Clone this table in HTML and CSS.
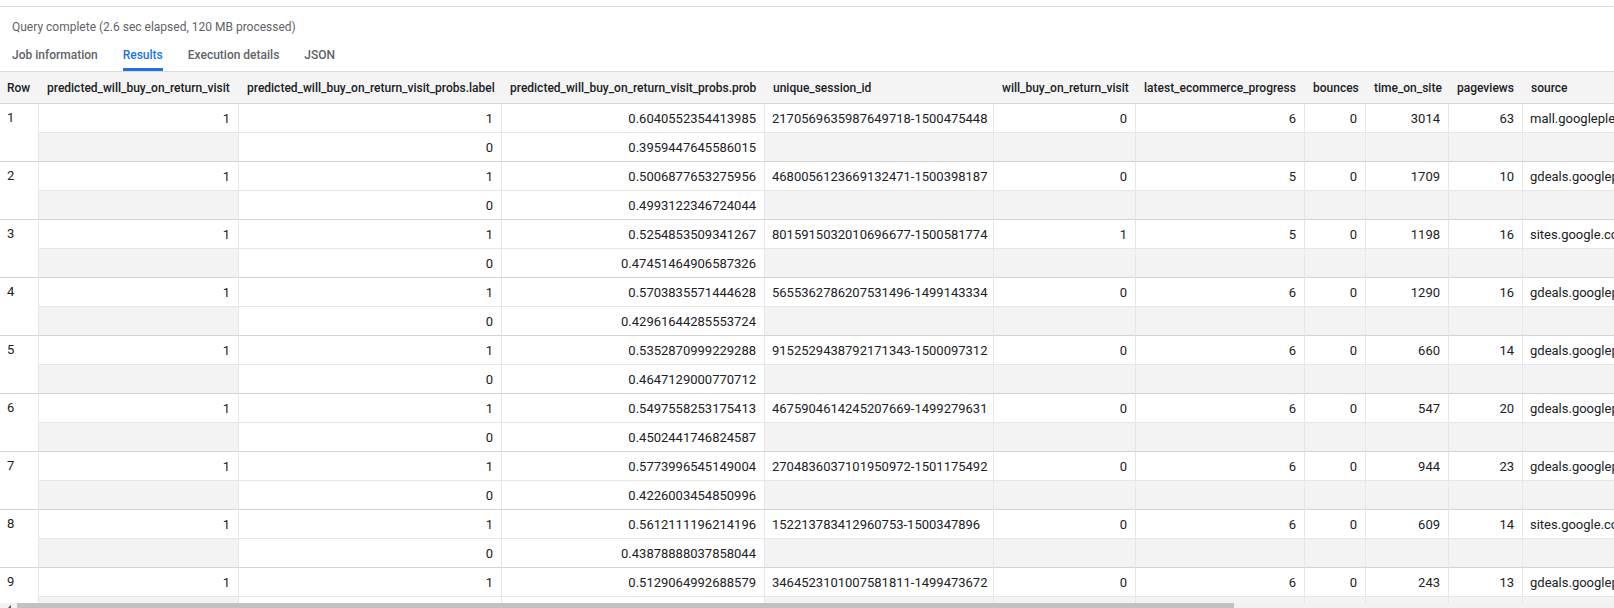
FILE: index.html
```html
<!DOCTYPE html>
<html>
<head>
<meta charset="utf-8">
<link rel="stylesheet" href="styles.css">
</head>
<body>
<div class="page">
  <div class="topline"></div>
  <div class="status">Query complete (2.6 sec elapsed, 120 MB processed)</div>
  <nav class="tabs">
    <span class="tab">Job information</span>
    <span class="tab active">Results</span>
    <span class="tab">Execution details</span>
    <span class="tab">JSON</span>
  </nav>
  <div class="results">
    <table class="grid">
      <colgroup>
        <col class="c-row"><col class="c1"><col class="c2"><col class="c3"><col class="c4"><col class="c5"><col class="c6"><col class="c7"><col class="c8"><col class="c9"><col class="c10">
      </colgroup>
      <thead>
        <tr>
          <th class="rowh">Row</th>
          <th>predicted_will_buy_on_return_visit</th>
          <th>predicted_will_buy_on_return_visit_probs.label</th>
          <th>predicted_will_buy_on_return_visit_probs.prob</th>
          <th>unique_session_id</th>
          <th>will_buy_on_return_visit</th>
          <th>latest_ecommerce_progress</th>
          <th>bounces</th>
          <th>time_on_site</th>
          <th>pageviews</th>
          <th>source</th>
        </tr>
      </thead>
      <tbody>
        <tr class="r1"><td class="rownum" rowspan="2">1</td><td class="num">1</td><td class="num">1</td><td class="num">0.6040552354413985</td><td>2170569635987649718-1500475448</td><td class="num">0</td><td class="num">6</td><td class="num">0</td><td class="num">3014</td><td class="num">63</td><td>mall.googleplex.com</td></tr>
        <tr class="r2"><td class="empty"></td><td class="num">0</td><td class="num">0.3959447645586015</td><td class="empty"></td><td class="empty"></td><td class="empty"></td><td class="empty"></td><td class="empty"></td><td class="empty"></td><td class="empty"></td></tr>

        <tr class="r1"><td class="rownum" rowspan="2">2</td><td class="num">1</td><td class="num">1</td><td class="num">0.5006877653275956</td><td>4680056123669132471-1500398187</td><td class="num">0</td><td class="num">5</td><td class="num">0</td><td class="num">1709</td><td class="num">10</td><td>gdeals.googleplex.com</td></tr>
        <tr class="r2"><td class="empty"></td><td class="num">0</td><td class="num">0.4993122346724044</td><td class="empty"></td><td class="empty"></td><td class="empty"></td><td class="empty"></td><td class="empty"></td><td class="empty"></td><td class="empty"></td></tr>

        <tr class="r1"><td class="rownum" rowspan="2">3</td><td class="num">1</td><td class="num">1</td><td class="num">0.5254853509341267</td><td>8015915032010696677-1500581774</td><td class="num">1</td><td class="num">5</td><td class="num">0</td><td class="num">1198</td><td class="num">16</td><td>sites.google.com</td></tr>
        <tr class="r2"><td class="empty"></td><td class="num">0</td><td class="num">0.47451464906587326</td><td class="empty"></td><td class="empty"></td><td class="empty"></td><td class="empty"></td><td class="empty"></td><td class="empty"></td><td class="empty"></td></tr>

        <tr class="r1"><td class="rownum" rowspan="2">4</td><td class="num">1</td><td class="num">1</td><td class="num">0.5703835571444628</td><td>5655362786207531496-1499143334</td><td class="num">0</td><td class="num">6</td><td class="num">0</td><td class="num">1290</td><td class="num">16</td><td>gdeals.googleplex.com</td></tr>
        <tr class="r2"><td class="empty"></td><td class="num">0</td><td class="num">0.42961644285553724</td><td class="empty"></td><td class="empty"></td><td class="empty"></td><td class="empty"></td><td class="empty"></td><td class="empty"></td><td class="empty"></td></tr>

        <tr class="r1"><td class="rownum" rowspan="2">5</td><td class="num">1</td><td class="num">1</td><td class="num">0.5352870999229288</td><td>9152529438792171343-1500097312</td><td class="num">0</td><td class="num">6</td><td class="num">0</td><td class="num">660</td><td class="num">14</td><td>gdeals.googleplex.com</td></tr>
        <tr class="r2"><td class="empty"></td><td class="num">0</td><td class="num">0.4647129000770712</td><td class="empty"></td><td class="empty"></td><td class="empty"></td><td class="empty"></td><td class="empty"></td><td class="empty"></td><td class="empty"></td></tr>

        <tr class="r1"><td class="rownum" rowspan="2">6</td><td class="num">1</td><td class="num">1</td><td class="num">0.5497558253175413</td><td>4675904614245207669-1499279631</td><td class="num">0</td><td class="num">6</td><td class="num">0</td><td class="num">547</td><td class="num">20</td><td>gdeals.googleplex.com</td></tr>
        <tr class="r2"><td class="empty"></td><td class="num">0</td><td class="num">0.4502441746824587</td><td class="empty"></td><td class="empty"></td><td class="empty"></td><td class="empty"></td><td class="empty"></td><td class="empty"></td><td class="empty"></td></tr>

        <tr class="r1"><td class="rownum" rowspan="2">7</td><td class="num">1</td><td class="num">1</td><td class="num">0.5773996545149004</td><td>2704836037101950972-1501175492</td><td class="num">0</td><td class="num">6</td><td class="num">0</td><td class="num">944</td><td class="num">23</td><td>gdeals.googleplex.com</td></tr>
        <tr class="r2"><td class="empty"></td><td class="num">0</td><td class="num">0.4226003454850996</td><td class="empty"></td><td class="empty"></td><td class="empty"></td><td class="empty"></td><td class="empty"></td><td class="empty"></td><td class="empty"></td></tr>

        <tr class="r1"><td class="rownum" rowspan="2">8</td><td class="num">1</td><td class="num">1</td><td class="num">0.5612111196214196</td><td>152213783412960753-1500347896</td><td class="num">0</td><td class="num">6</td><td class="num">0</td><td class="num">609</td><td class="num">14</td><td>sites.google.com</td></tr>
        <tr class="r2"><td class="empty"></td><td class="num">0</td><td class="num">0.43878888037858044</td><td class="empty"></td><td class="empty"></td><td class="empty"></td><td class="empty"></td><td class="empty"></td><td class="empty"></td><td class="empty"></td></tr>

        <tr class="r1"><td class="rownum" rowspan="2">9</td><td class="num">1</td><td class="num">1</td><td class="num">0.5129064992688579</td><td>3464523101007581811-1499473672</td><td class="num">0</td><td class="num">6</td><td class="num">0</td><td class="num">243</td><td class="num">13</td><td>gdeals.googleplex.com</td></tr>
        <tr class="r2"><td class="empty"></td><td class="num">0</td><td class="num">0.48709350073114213</td><td class="empty"></td><td class="empty"></td><td class="empty"></td><td class="empty"></td><td class="empty"></td><td class="empty"></td><td class="empty"></td></tr>
      </tbody>
    </table>
  </div>
  <div class="hscroll">
    <span class="arrow"></span>
    <span class="thumb"></span>
  </div>
</div>
</body>
</html>
```

FILE: styles.css
```css
html, body {
  margin: 0;
  padding: 0;
  background: #ffffff;
  overflow: hidden;
}

body {
  font-family: Roboto, "Liberation Sans", Arial, sans-serif;
  font-size: 13px;
  color: #202124;
}

.page {
  width: 1614px;
  height: 608px;
  overflow: hidden;
  display: flex;
  flex-direction: column;
}

.topline {
  height: 6px;
  border-bottom: 1px solid #dadce0;
  flex: none;
}

.status {
  flex: none;
  padding: 10px 0 0 12px;
  height: 20px;
  line-height: 20px;
  color: #5f6368;
  font-size: 12px;
}

.tabs {
  flex: none;
  display: flex;
  gap: 25px;
  padding: 0 12px;
  height: 34px;
}

.tab {
  padding-top: 8px;
  line-height: 20px;
  height: 23px;
  border-bottom: 3px solid transparent;
  color: #5f6368;
  font-weight: 500;
  font-size: 12px;
}

.tab.active {
  color: #1a73e8;
  border-bottom-color: #1a73e8;
}

.results {
  flex: none;
  height: 532px;
  overflow: hidden;
}

.grid {
  border-collapse: separate;
  border-spacing: 0;
  table-layout: fixed;
  width: 1742px;
}

.c-row { width: 39px; }
.c1 { width: 200px; }
.c2 { width: 263px; }
.c3 { width: 263px; }
.c4 { width: 229px; }
.c5 { width: 142px; }
.c6 { width: 169px; }
.c7 { width: 61px; }
.c8 { width: 83px; }
.c9 { width: 74px; }
.c10 { width: 219px; }

.grid th {
  box-sizing: border-box;
  height: 33px;
  padding: 0 8px;
  background: #f4f4f4;
  border-top: 1px solid #dadada;
  border-bottom: 1px solid #d6d6d6;
  text-align: left;
  font-size: 12px;
  font-weight: 500;
  color: #202124;
  white-space: nowrap;
  overflow: hidden;
}

.grid th.rowh {
  padding-left: 7px;
}

.grid td {
  box-sizing: border-box;
  height: 29px;
  padding: 0 8px 0 7px;
  border-right: 1px solid #e6e6e6;
  border-bottom: 1px solid #e6e6e6;
  white-space: nowrap;
  overflow: hidden;
  background: #ffffff;
}

.grid td.num {
  text-align: right;
}

.grid td.rownum {
  vertical-align: top;
  line-height: 28px;
  padding-left: 7px;
  border-bottom: 1px solid #d4d4d4;
}

.grid tr.r2 td {
  border-bottom: 1px solid #d4d4d4;
}

.grid td.empty {
  background: #f3f3f3;
}

.hscroll {
  flex: none;
  display: flex;
  height: 17px;
  background: #f1f1f1;
}

.arrow {
  width: 17px;
  flex: none;
  display: flex;
  justify-content: center;
}

.arrow::before {
  content: "";
  margin-top: 4px;
  width: 0;
  height: 0;
  border-left: 4px solid transparent;
  border-right: 4px solid transparent;
  border-bottom: 4px solid #505050;
  transform: rotate(-90deg);
}

.thumb {
  width: 1217px;
  height: 17px;
  background: #c1c1c1;
  flex: none;
}
```
